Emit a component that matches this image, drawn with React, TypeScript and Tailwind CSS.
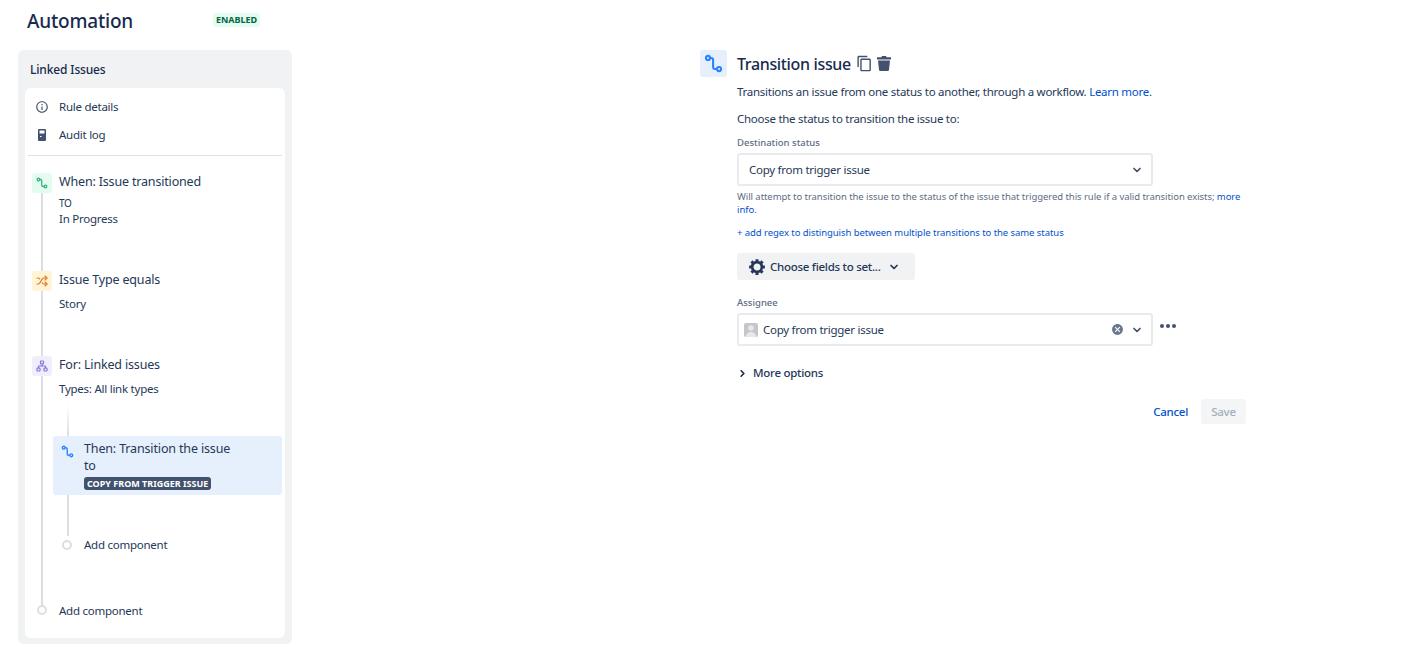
import { ChevronDown, ChevronRight, Network, Shuffle } from "lucide-react";
import { MdCancel, MdContentCopy, MdInfoOutline } from "react-icons/md";
import type { ReactNode } from "react";

function TransitionIcon({ className }: { className: string }) {
  return (
    <svg viewBox="0 0 24 24" fill="none" stroke="currentColor" strokeWidth="2.6" className={className}>
      <circle cx="5" cy="5" r="2.6" />
      <circle cx="19" cy="19" r="2.6" />
      <path d="M7.6 5H9a2.5 2.5 0 0 1 2.5 2.5v9A2.5 2.5 0 0 0 14 19h2.4" />
    </svg>
  );
}

function AuditIcon() {
  return (
    <svg viewBox="0 0 8 12" className="w-[8px] h-[12px] text-[#42526e]">
      <path
        fillRule="evenodd"
        fill="currentColor"
        d="M1 0h6a1 1 0 0 1 1 1v10a1 1 0 0 1-1 1H1a1 1 0 0 1-1-1V1a1 1 0 0 1 1-1zm.5 1.500V4.500h5v-3zM2 7v1h1.500V7z"
      />
    </svg>
  );
}

function TrashIcon() {
  return (
    <svg viewBox="0 0 14 15" className="ml-[4px] w-[14px] h-[15px] text-[#42526e]">
      <path fill="currentColor" d="M5 0h4l.6 1.200H14v2.300H0V1.200h4.400zM1 4.500h12l-1 9.300A1.300 1.300 0 0 1 10.700 15H3.300A1.300 1.300 0 0 1 2 13.800z" />
    </svg>
  );
}

function GearIcon() {
  const angles = [0, 45, 90, 135];
  return (
    <svg viewBox="0 0 24 24" fill="none" stroke="currentColor" className="w-[18px] h-[18px] text-[#253858]">
      <circle cx="12" cy="12" r="6.5" strokeWidth="3.6" />
      {angles.map((a) => (
        <path key={a} d="M12 1.500v21" strokeWidth="4" strokeDasharray="3.500 14 3.500" transform={`rotate(${a} 12 12)`} />
      ))}
    </svg>
  );
}

function AvatarIcon() {
  return (
    <svg viewBox="0 0 14 14" className="ml-[5px] w-[14px] h-[14px]">
      <rect width="14" height="14" rx="2" fill="#c4c6c9" />
      <circle cx="7" cy="5" r="2.800" fill="#e8e8e8" />
      <path d="M2 14c0-3.500 2-5 5-5s5 1.500 5 5z" fill="#e8e8e8" />
    </svg>
  );
}

function Rail({ icon, children, last }: { icon: ReactNode; children: ReactNode; last?: boolean }) {
  return (
    <div className="flex">
      <div className="w-[20px] flex flex-col items-center shrink-0">
        {icon}
        {!last && <div className="w-[2px] flex-1 bg-[#dcdee4]" />}
      </div>
      <div className="ml-[7px] flex-1 min-w-0">{children}</div>
    </div>
  );
}

function IconBox({ bg, children }: { bg: string; children: ReactNode }) {
  return <div className={`w-[20px] h-[20px] rounded-[3px] flex items-center justify-center ${bg}`}>{children}</div>;
}

const Dot = () => <div className="w-[10px] h-[10px] rounded-full border-2 border-[#dcdee4] bg-white shrink-0" />;

function Select({ children, clear }: { children: ReactNode; clear?: boolean }) {
  return (
    <div className="w-[416px] h-[33px] border-2 border-[#e9eaed] rounded-[3px] flex items-center text-[#253858]">
      {children}
      <div className="ml-auto flex items-center pr-[8px]">
        {clear && <MdCancel className="w-[13px] h-[13px] text-[#6b778c] mr-[7px]" />}
        <ChevronDown className="w-[12px] h-[12px] text-[#42526e]" strokeWidth={3.5} />
      </div>
    </div>
  );
}

export default function App() {
  return (
    <div className="flex h-[654px] bg-white text-[#172b4d] overflow-hidden font-['Noto_Sans',sans-serif]">
      <aside className="w-[292px] ml-[18px] shrink-0 flex flex-col">
        <div className="h-[50px] flex items-start pl-[9px] pt-[7px]">
          <h1 className="text-[19px] leading-[28px] font-medium w-[186px] tracking-[-0.2px]">Automation</h1>
          <span className="mt-[6px] h-[14px] w-[47px] text-center rounded-[3px] bg-[#e3fcef] text-[#006644] text-[9px] font-bold leading-[14px]">
            ENABLED
          </span>
        </div>
        <div className="w-[274px] h-[594px] bg-[#f1f2f4] rounded-[6px] px-[7px] pb-[6px] flex flex-col">
          <div className="h-[38px] flex items-center pl-[5px] pt-[2px] text-[12px] font-medium tracking-[-0.15px]">Linked Issues</div>
          <div className="flex-1 bg-white rounded-[6px] text-[11.500px] tracking-[-0.25px] text-[#253858]">
            <div className="h-[68px] mx-[3px] border-b border-[#dfe1e6] pt-[5px]">
              <div className="h-[28px] flex items-center">
                <div className="w-[28px] flex justify-center">
                  <MdInfoOutline className="w-[14px] h-[14px] text-[#42526e]" />
                </div>
                <span className="ml-[3px]">Rule details</span>
              </div>
              <div className="h-[28px] flex items-center">
                <div className="w-[28px] flex justify-center">
                  <AuditIcon />
                </div>
                <span className="ml-[3px]">Audit log</span>
              </div>
            </div>
            <div className="pl-[7px] pt-[17px]">
              <Rail
                icon={
                  <IconBox bg="bg-[#e3fcef]">
                    <TransitionIcon className="w-[12px] h-[12px] text-[#36b37e]" />
                  </IconBox>
                }
              >
                <div className="h-[98px]">
                  <div className="text-[12.500px] leading-[18px] tracking-[-0.17px]">When: Issue transitioned</div>
                  <div className="text-[10px] leading-[14px] mt-[5px]">TO</div>
                  <div className="leading-[16px] mt-[1px]">In Progress</div>
                </div>
              </Rail>
              <Rail
                icon={
                  <IconBox bg="bg-[#fff4d6]">
                    <Shuffle className="w-[12px] h-[12px] text-[#e2791d]" strokeWidth={2.2} />
                  </IconBox>
                }
              >
                <div className="h-[85px]">
                  <div className="text-[12.500px] leading-[18px] tracking-[-0.17px]">Issue Type equals</div>
                  <div className="leading-[16px] mt-[7px]">Story</div>
                </div>
              </Rail>
              <Rail
                icon={
                  <IconBox bg="bg-[#f0eefd]">
                    <Network className="w-[12px] h-[12px] text-[#8777d9]" strokeWidth={2.4} />
                  </IconBox>
                }
              >
                <div className="h-[249px] -ml-[6px] pl-[6px] flex flex-col">
                  <div className="text-[12.500px] leading-[18px] tracking-[-0.17px]">For: Linked issues</div>
                  <div className="leading-[16px] mt-[7px]">Types: All link types</div>
                  <div className="ml-[8px] w-[2px] h-[32px] bg-gradient-to-b from-white to-[#dcdee4] mt-[7px]" />
                  <div className="-ml-[6px] w-[229px] h-[59px] bg-[#e6f0fd] rounded-[3px] flex">
                    <div className="w-[31px] pl-[8px] pt-[9px]">
                      <TransitionIcon className="w-[13px] h-[13px] text-[#2684ff]" />
                    </div>
                    <div className="pt-[4px] w-[160px]">
                      <div className="text-[12.500px] leading-[17px] tracking-[-0.15px]">Then: Transition the issue to</div>
                      <div className="mt-[3px] w-fit h-[13px] px-[3px] rounded-[3px] bg-[#42526e] text-white text-[9px] tracking-normal font-bold leading-[13px] whitespace-nowrap">
                        COPY FROM TRIGGER ISSUE
                      </div>
                    </div>
                  </div>
                  <div className="ml-[8px] w-[2px] h-[41px] bg-[#dcdee4]" />
                  <div className="flex items-center">
                    <div className="ml-[3px]">
                      <Dot />
                    </div>
                    <span className="ml-[12px]">Add component</span>
                  </div>
                </div>
              </Rail>
              <Rail
                last
                icon={
                  <div className="h-[10px] flex">
                    <Dot />
                  </div>
                }
              >
                <div className="leading-[10px] pt-[1px]">Add component</div>
              </Rail>
            </div>
          </div>
        </div>
      </aside>

      <main className="ml-[390px] pt-[50px] w-[546px] flex items-start">
        <div className="w-[27px] h-[27px] rounded-[3px] bg-[#e6f0fd] flex items-center justify-center shrink-0">
          <TransitionIcon className="w-[19px] h-[19px] text-[#2684ff]" />
        </div>
        <div className="ml-[10px] w-[509px] text-[11.500px] tracking-[-0.27px] text-[#253858]">
          <div className="h-[27px] flex items-center">
            <h2 className="text-[16px] font-medium text-[#172b4d] tracking-[-0.35px]">Transition issue</h2>
            <MdContentCopy className="ml-[5px] w-[17px] h-[17px] text-[#42526e]" />
            <TrashIcon />
          </div>
          <p className="mt-[7px] leading-[16px]">
            Transitions an issue from one status to another, through a workflow.{" "}
            <span className="text-[#0052cc]">Learn more.</span>
          </p>
          <p className="mt-[11px] leading-[16px]">Choose the status to transition the issue to:</p>
          <div className="mt-[9px] text-[9.500px] tracking-normal leading-[14px] font-medium text-[#5e6c84]">Destination status</div>
          <div className="mt-[3px]">
            <Select>
              <span className="ml-[10px] pt-[1px]">Copy from trigger issue</span>
            </Select>
          </div>
          <p className="mt-[4px] text-[9.500px] tracking-[-0.06px] leading-[13px] text-[#5e6c84] w-[506px]">
            Will attempt to transition the issue to the status of the issue that triggered this rule if a valid
            transition exists; <a className="text-[#0052cc]">more info.</a>
          </p>
          <div className="mt-[10px] text-[9.500px] tracking-[-0.06px] leading-[13px] text-[#0052cc]">
            + add regex to distinguish between multiple transitions to the same status
          </div>
          <button className="mt-[14px] w-[178px] h-[27px] rounded-[3px] bg-[#f1f2f4] flex items-center pl-[11px] font-medium text-[#253858]">
            <GearIcon />
            <span className="ml-[4px]">Choose fields to set...</span>
            <ChevronDown className="ml-[7px] w-[12px] h-[12px]" strokeWidth={3.5} />
          </button>
          <div className="mt-[16px] text-[9.500px] tracking-normal leading-[14px] font-medium text-[#5e6c84]">Assignee</div>
          <div className="mt-[3px] flex items-start">
            <Select clear>
              <AvatarIcon />
              <span className="ml-[5px] pt-[1px]">Copy from trigger issue</span>
            </Select>
            <div className="ml-[7px] mt-[11px] flex gap-[2px]">
              <i className="w-[4px] h-[4px] rounded-full bg-[#42526e]" />
              <i className="w-[4px] h-[4px] rounded-full bg-[#42526e]" />
              <i className="w-[4px] h-[4px] rounded-full bg-[#42526e]" />
            </div>
          </div>
          <div className="mt-[19px] h-[16px] flex items-center font-medium">
            <ChevronRight className="w-[11px] h-[11px] text-[#172b4d]" strokeWidth={3.5} />
            <span className="ml-[5px]">More options</span>
          </div>
          <div className="mt-[18px] flex items-center justify-end">
            <span className="text-[#0052cc] font-medium">Cancel</span>
            <button className="ml-[13px] w-[45px] h-[25px] rounded-[3px] bg-[#f4f5f7] text-[#a5adba] font-medium">Save</button>
          </div>
        </div>
      </main>
    </div>
  );
}
